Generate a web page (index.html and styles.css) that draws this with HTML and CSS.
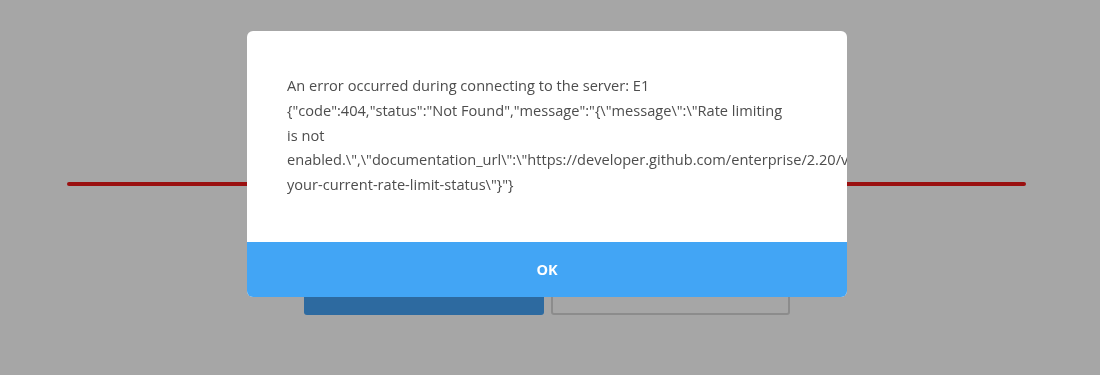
FILE: index.html
```html
<!DOCTYPE HTML>
<html>
<head>
<meta charset="utf-8" />
<title>Connection error</title>
<link rel="stylesheet" href="styles.css">
</head>

<body>
<div class="page">
	<div class="progress"></div>
	<div class="actions">
		<button class="btn btn-primary" type="button">Retry</button>
		<button class="btn btn-outline" type="button">Cancel</button>
	</div>
</div>

<div class="overlay">
	<div class="dialog">
		<div class="dialog-body">
			<p>An error occurred during connecting to the server: E1<br>{"code":404,"status":"Not Found","message":"{\"message\":\"Rate limiting is not enabled.\",\"documentation_url\":\"https://developer.github.com/enterprise/2.20/v3/rate_limit/#get-your-current-rate-limit-status\"}"}</p>
		</div>
		<button class="dialog-ok" type="button">OK</button>
	</div>
</div>
</body>
</html>
```

FILE: styles.css
```css
body { margin: 0; background: #fff; font-family: "Open Sans", "Noto Sans", sans-serif; }

.page { padding: 182px 74px 0 67px; }
	.progress { height: 4px; border-radius: 2px; background: #ed1919; }
	.actions { display: flex; gap: 7px; margin: 88px 0 0 237px; }
		.btn { width: 240px; height: 41px; border-radius: 3px; font: inherit; color: transparent; }
		.btn-primary { background: #45a3f6; border: 0; }
		.btn-outline { background: #fff; border: 2px solid #d8d8d8; width: 239px; }

.overlay {
	position: fixed;
	inset: 0;
	background: rgba(0, 0, 0, 0.35);
	display: flex;
	align-items: flex-start;
	padding: 31px 0 0 247px;
}
	.dialog {
		width: 600px;
		background: #fff;
		border-radius: 6px;
		overflow: hidden;
	}
		.dialog-body { height: 211px; box-sizing: border-box; padding: 42px 40px 0; }
			.dialog-body p { max-width: 500px; margin: 0; font-size: 14.6px; line-height: 24.75px; color: #4d4d4d; }
		.dialog-ok {
			display: block;
			width: 100%;
			height: 55px;
			border: 0;
			background: #42a5f5;
			color: #fff;
			font: 700 14.5px "Open Sans", "Noto Sans", sans-serif;
		}
```
